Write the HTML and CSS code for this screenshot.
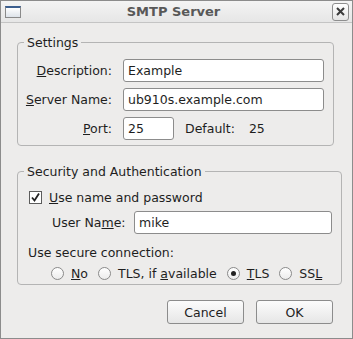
FILE: index.html
```html
<!DOCTYPE html>
<html lang="en">
  <head>
    <meta charset="UTF-8" />
    <title>SMTP Server</title>
    <link rel="stylesheet" href="styles.css">
  </head>
  <body>
    <div class="window">
      <!-- title bar -->
      <div class="titlebar">
        <span class="winicon"></span>
        <span class="title">SMTP Server</span>
        <span class="closebtn">
          <svg width="9" height="9" viewBox="0 0 9 9">
            <path d="M1 1 L8 8 M8 1 L1 8" stroke="#3a3a3a" stroke-width="2" />
          </svg>
        </span>
      </div>

      <div class="content">
        <fieldset class="frame settings">
          <legend>Settings</legend>
          <div class="row">
            <label class="lbl"><u>D</u>escription:</label>
            <div class="field">Example</div>
          </div>
          <div class="row">
            <label class="lbl"><u>S</u>erver Name:</label>
            <div class="field">ub910s.example.com</div>
          </div>
          <div class="row">
            <label class="lbl"><u>P</u>ort:</label>
            <div class="portline">
              <div class="field port">25</div>
              <span class="default">Default:</span>
              <span class="defval">25</span>
            </div>
          </div>
        </fieldset>

        <fieldset class="frame security">
          <legend>Security and Authentication</legend>
          <div class="checkrow">
            <span class="check">
              <svg width="11" height="11" viewBox="0 0 11 11">
                <path d="M2 5.5 L4.5 8.5 L9 1.5" fill="none" stroke="#222" stroke-width="1.8" />
              </svg>
            </span>
            <span><u>U</u>se name and password</span>
          </div>
          <div class="userrow">
            <label class="userlbl">User Na<u>m</u>e:</label>
            <div class="field">mike</div>
          </div>
          <div class="secure">Use secure connection:</div>
          <div class="radios">
            <span class="opt"><span class="radio"></span><span><u>N</u>o</span></span>
            <span class="opt"><span class="radio"></span><span>TLS, if <u>a</u>vailable</span></span>
            <span class="opt"><span class="radio on"></span><span><u>T</u>LS</span></span>
            <span class="opt"><span class="radio"></span><span>SS<u>L</u></span></span>
          </div>
        </fieldset>

        <div class="buttons">
          <button class="btn">Cancel</button>
          <button class="btn">OK</button>
        </div>
      </div>
    </div>
  </body>
</html>
```

FILE: styles.css
```css
body {
  margin: 0;
  font-family: "DejaVu Sans", sans-serif;
  font-size: 12.5px;
  color: #1e1e1e;
}

.window {
  width: 353px;
  height: 339px;
  box-sizing: border-box;
  border: 1px solid #8c8c8c;
  background: #edeceb;
  display: flex;
  flex-direction: column;
}

/* title bar */
.titlebar {
  height: 21px;
  border-bottom: 1px solid #c4c4c4;
  background: linear-gradient(#f4f4f4, #e6e6e6);
  display: flex;
  align-items: center;
}
.winicon {
  width: 14px;
  height: 9px;
  margin-left: 4px;
  border: 1px solid #8a8a8a;
  border-top: 2px solid #3c5f8f;
  background: linear-gradient(#ffffff, #dde3ea);
}
.title {
  flex: 1;
  text-align: center;
  font-weight: bold;
  font-size: 13px;
  color: #585858;
  padding-right: 6px;
}
.closebtn {
  width: 15px;
  height: 16px;
  margin-right: 3px;
  border: 1px solid #8e8e8e;
  border-radius: 3px;
  background: linear-gradient(#ffffff, #e4e4e4);
  display: flex;
  align-items: center;
  justify-content: center;
}

.content {
  padding: 12px 18px 0 16px;
  display: flex;
  flex-direction: column;
}

/* frames */
.frame {
  margin: 0;
  border: 1px solid #b4b4b4;
  border-radius: 4px;
  padding: 0 9px 5px 0;
}
.frame legend {
  margin-left: 6px;
  padding: 0 3px;
  line-height: 15px;
}

.settings {
  padding-top: 9px;
  display: flex;
  flex-direction: column;
  gap: 6px;
}
.row {
  display: grid;
  grid-template-columns: 94px 1fr;
  column-gap: 11px;
  align-items: center;
}
.lbl {
  text-align: right;
}
.field {
  height: 21px;
  line-height: 21px;
  border: 1px solid #8c8c8c;
  border-radius: 3px;
  background: #fff;
  padding-left: 4px;
}
.portline {
  display: flex;
  align-items: center;
}
.port {
  width: 45px;
}
.default {
  margin-left: 11px;
}
.defval {
  margin-left: 14px;
}

.security {
  margin-top: 18px;
  padding-top: 8px;
  padding-bottom: 3px;
}
.checkrow {
  display: flex;
  align-items: center;
  height: 20px;
  padding-left: 11px;
}
.check {
  width: 11px;
  height: 11px;
  border: 1px solid #5c5c5c;
  background: #fff;
  margin-right: 7px;
  display: flex;
}
.userrow {
  display: flex;
  align-items: center;
  margin-top: 4px;
  padding-left: 34px;
}
.userlbl {
  width: 82px;
}
.userrow .field {
  flex: 1;
}
.secure {
  margin-top: 11px;
  padding-left: 10px;
  line-height: 16px;
}
.radios {
  margin-top: 4px;
  height: 16px;
  padding-left: 33px;
  display: flex;
  align-items: center;
  white-space: nowrap;
}
.opt {
  display: flex;
  align-items: center;
  margin-right: 10px;
}
.radio {
  width: 11px;
  height: 11px;
  border: 1px solid #8a8a8a;
  border-radius: 50%;
  background: linear-gradient(#ffffff, #ececec);
  margin-right: 7px;
  position: relative;
}
.radio.on::after {
  content: "";
  position: absolute;
  left: 3px;
  top: 3px;
  width: 5px;
  height: 5px;
  border-radius: 50%;
  background: #222;
}

.buttons {
  margin-top: 15px;
  display: flex;
  justify-content: flex-end;
  gap: 12px;
  padding-right: 1px;
}
.btn {
  width: 77px;
  height: 24px;
  font-family: "DejaVu Sans", sans-serif;
  font-size: 12.5px;
  color: #1e1e1e;
  border: 1px solid #8c8c8c;
  border-radius: 3px;
  background: linear-gradient(#fcfcfc, #e6e6e6);
}
```
